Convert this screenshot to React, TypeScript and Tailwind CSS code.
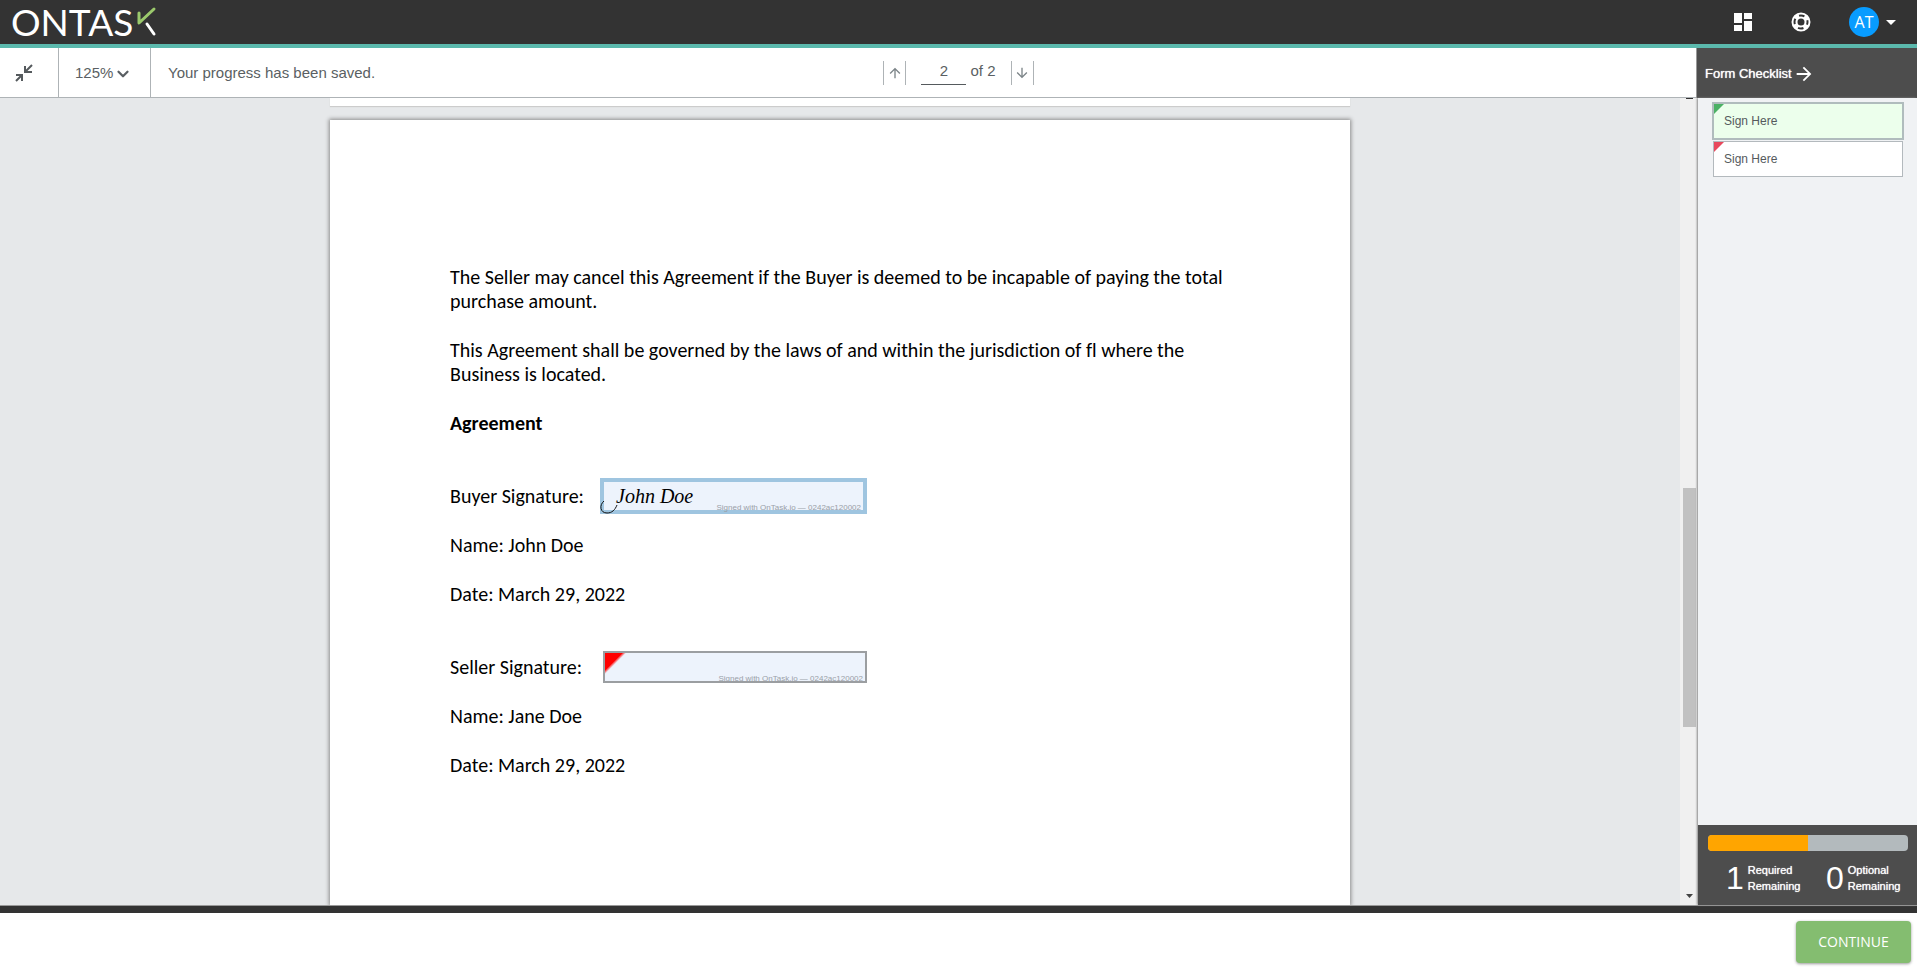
import {
  MdArrowDownward,
  MdArrowDropDown,
  MdArrowForward,
  MdArrowUpward,
  MdDashboard,
} from "react-icons/md";
import { ChevronDown } from "lucide-react";

const checklist = [
  { id: "buyer", label: "Sign Here", done: true },
  { id: "seller", label: "Sign Here", done: false },
];

const stamp = "Signed with OnTask.io — 0242ac120002";

const progress = 50;

function Logo() {
  return (
    <svg width="150" height="44" viewBox="0 0 150 44" fill="none" role="img" aria-label="OnTask">
      <text x="-1" y="36" fontSize="37" fill="#ffffff" fontFamily="Lato, sans-serif">
        ONTAS
      </text>
      <path d="M142 9 L127 23 V13" stroke="#9bc96c" strokeWidth="3" strokeLinecap="round" strokeLinejoin="round" />
      <path d="M135 24 L142 34" stroke="#ffffff" strokeWidth="3" strokeLinecap="round" />
    </svg>
  );
}

function LifeRing() {
  return (
    <svg width="20" height="20" viewBox="0 0 20 20" fill="none">
      <circle cx="10" cy="10" r="6.500" stroke="#ffffff" strokeWidth="6" />
      <circle cx="10" cy="10" r="6.500" stroke="#333333" strokeWidth="2" strokeDasharray="5.600 4.610" strokeDashoffset="2.800" />
    </svg>
  );
}

function TopBar() {
  return (
    <header className="flex h-12 shrink-0 items-center justify-between border-b-4 border-[#5bb9ad] bg-[#333333] pl-3 pr-[14px]">
      <a href="#home">
        <Logo />
      </a>
      <div className="flex items-center text-white">
        <button type="button" aria-label="Dashboard" className="mr-9">
          <MdDashboard size={24} />
        </button>
        <button type="button" aria-label="Help" className="mr-[38px]">
          <LifeRing />
        </button>
        <button type="button" aria-label="Account" className="flex items-center">
          <span className="flex size-[30px] items-center justify-center rounded-full bg-[#089cff] font-['Open_Sans',sans-serif] text-base">
            AT
          </span>
          <MdArrowDropDown size={24} />
        </button>
      </div>
    </header>
  );
}

function Toolbar() {
  return (
    <div className="flex h-[50px] shrink-0 border-b border-[#aeb3b6] bg-white text-[15px] text-[#5a5f63]">
      <div className="flex flex-1 items-stretch">
        <button type="button" aria-label="Exit full screen" className="flex w-[59px] items-center justify-center border-r border-[#aeb3b6] pr-[10px]">
          <svg width="18" height="18" viewBox="0 0 18 18" fill="none" stroke="#555a5d" strokeWidth="2">
            <path d="M10 2v6h7M10 8l7-7M1 11h6v6M7 11l-6 6" />
          </svg>
        </button>
        <div className="flex w-[92px] items-center border-r border-[#aeb3b6] pl-4 pt-0.5">
          <select aria-label="Zoom" defaultValue="125%" className="w-[39px] appearance-none bg-transparent">
            <option>100%</option>
            <option>125%</option>
            <option>150%</option>
          </select>
          <ChevronDown size={18} strokeWidth={3} />
        </div>
        <p className="flex items-center pl-[17px] pt-0.5">Your progress has been saved.</p>
      </div>
      <nav aria-label="Pages" className="flex items-start pt-[13px]">
        <button type="button" aria-label="Previous page" className="mr-[15px] flex h-6 w-[23px] items-center justify-center border-x border-[#aeb3b6] text-[#7c8488]">
          <MdArrowUpward size={16} />
        </button>
        <input
          aria-label="Page number"
          defaultValue="2"
          className="mr-1 h-6 w-[45px] border-b border-[#555a5d] bg-transparent pb-1 text-center"
        />
        <span className="mr-[15px] leading-5">of 2</span>
        <button type="button" aria-label="Next page" className="flex h-6 w-[23px] items-center justify-center border-x border-[#aeb3b6] text-[#7c8488]">
          <MdArrowDownward size={16} />
        </button>
      </nav>
      <div className="flex flex-1 justify-end">
        <button
          type="button"
          className="-mb-px flex w-[221px] items-center gap-px border-l border-[#999999] bg-[#4d4d4d] pl-2 pt-0.5 text-[13px] text-white [text-shadow:0_0_1px_#ffffff]"
        >
          Form Checklist
          <MdArrowForward size={22} />
        </button>
      </div>
    </div>
  );
}

function Stamp() {
  return (
    <span className="absolute -bottom-1 right-0.5 whitespace-nowrap text-[8px] leading-3 text-[#9aa0a8]">
      {stamp}
    </span>
  );
}

function DocumentPage() {
  return (
    <article className="h-[1320px] w-full max-w-[1020px] bg-white px-[120px] pt-[145px] font-[Carlito,Calibri,Lato,sans-serif] text-xl leading-6 text-black shadow-[0_0_4px_1px_#8a8a8a] [font-variant-ligatures:none]">
      <p className="mb-[25px]">
        The Seller may cancel this Agreement if the Buyer is deemed to be incapable of paying the total
        purchase amount.
      </p>
      <p className="mb-[25px]">
        This Agreement shall be governed by the laws of and within the jurisdiction of fl where the
        Business is located.
      </p>
      <h2 className="mb-[49px] font-bold">Agreement</h2>

      <div className="mb-[25px] flex h-6 w-[417px] items-center justify-between">
        <span>Buyer Signature:</span>
        <button
          type="button"
          className="relative h-9 w-[267px] border-4 border-[#9fc5e0] bg-[#edf3fc] font-['Liberation_Sans',sans-serif]"
        >
          <span className="absolute -top-0.5 left-3 font-['Liberation_Serif',cursive] text-xl italic leading-8">
            John Doe
          </span>
          <svg width="22" height="14" viewBox="0 0 22 14" fill="none" stroke="#111111" className="absolute -bottom-1 -left-1">
            <path d="M4 1C-1 5 0 13 7 13C12 13 15 10 17 5" />
          </svg>
          <Stamp />
        </button>
      </div>
      <p className="mb-[25px]">Name: John Doe</p>
      <p className="mb-[49px]">Date: March 29, 2022</p>

      <div className="mb-[25px] flex h-6 w-[417px] items-center justify-between">
        <span>Seller Signature:</span>
        <button
          type="button"
          className="relative h-8 w-[264px] border-2 border-[#9b9ea1] bg-[#edf3fc] bg-[linear-gradient(135deg,#ff0000_12px,transparent_15px)] font-['Liberation_Sans',sans-serif]"
        >
          <Stamp />
        </button>
      </div>
      <p className="mb-[25px]">Name: Jane Doe</p>
      <p>Date: March 29, 2022</p>
    </article>
  );
}

function Scrollbar() {
  return (
    <div aria-hidden="true" className="flex w-[18px] shrink-0 flex-col items-center bg-[#f0f0f0] pl-px">
      <span className="h-px w-[7px] bg-[#333333]" />
      <div className="flex-[388]" />
      <div className="h-[239px] w-[13px] bg-[#c1c1c1]" />
      <div className="flex-[166]" />
      <svg width="7" height="4" viewBox="0 0 7 4" className="mb-[7px]">
        <path d="M0 0h7L3.500 4z" fill="#444444" />
      </svg>
    </div>
  );
}

function Checklist() {
  return (
    <aside className="z-10 flex w-[219px] shrink-0 flex-col bg-[#f0f2f4] shadow-[-1px_0_2px_#888888]">
      <ul className="flex flex-1 flex-col gap-px pl-[14px] pr-[13px] pt-1">
        {checklist.map((item) => (
          <li key={item.id} className="flex">
            <button
              type="button"
              className={
                item.done
                  ? "relative h-[38px] flex-1 border-2 border-[#b0bcbd] bg-[#ecffec] pl-[10px] text-left text-xs text-[#555a5d]"
                  : "relative mx-px h-9 flex-1 border border-[#b3b9bd] bg-white pl-[10px] text-left text-xs text-[#555a5d]"
              }
            >
              <span
                className={
                  item.done
                    ? "absolute left-0 top-0 size-[10px] bg-[#4bb165] [clip-path:polygon(0_0,100%_0,0_100%)]"
                    : "absolute left-0 top-0 size-[10px] bg-[#e8485c] [clip-path:polygon(0_0,100%_0,0_100%)]"
                }
              />
              {item.label}
            </button>
          </li>
        ))}
      </ul>
      <div className="h-20 bg-[#4d4d4d] pl-[10px] pr-[9px] pt-[10px] text-white">
        <div className="h-4 overflow-hidden rounded bg-[#b3babd]">
          <div className="h-full bg-[#ffa500]" style={{ width: `${progress}%` }} />
        </div>
        <div className="mt-[11px] flex pl-[18px] text-[11px] leading-4 [text-shadow:0_0_1px_#ffffff]">
          <div className="flex w-[100px] items-center gap-1">
            <span className="text-[32px] [text-shadow:none]">1</span>
            <span>Required<br />Remaining</span>
          </div>
          <div className="flex items-center gap-1">
            <span className="text-[32px] [text-shadow:none]">0</span>
            <span>Optional<br />Remaining</span>
          </div>
        </div>
      </div>
    </aside>
  );
}

export default function App() {
  return (
    <div className="flex h-screen flex-col overflow-hidden bg-white font-['Liberation_Sans',Arial,sans-serif]">
      <TopBar />
      <Toolbar />
      <div className="flex min-h-0 flex-1 border-b border-[#999999]">
        <main className="flex min-w-0 flex-1 flex-col items-center overflow-hidden bg-[#e6e8ea]">
          <div className="mb-[14px] h-2 w-full max-w-[1020px] shrink-0 bg-white shadow-[0_1px_1px_#cccccc]" />
          <DocumentPage />
        </main>
        <Scrollbar />
        <Checklist />
      </div>
      <footer className="flex h-[63px] shrink-0 items-center justify-end border-t-[7px] border-[#333333] bg-white pr-[6px] pt-px">
        <button
          type="button"
          className="h-[42px] w-[115px] rounded bg-[#84bd70] font-['Open_Sans',sans-serif] text-sm text-white shadow-[0_1px_3px_#999999]"
        >
          CONTINUE
        </button>
      </footer>
    </div>
  );
}
